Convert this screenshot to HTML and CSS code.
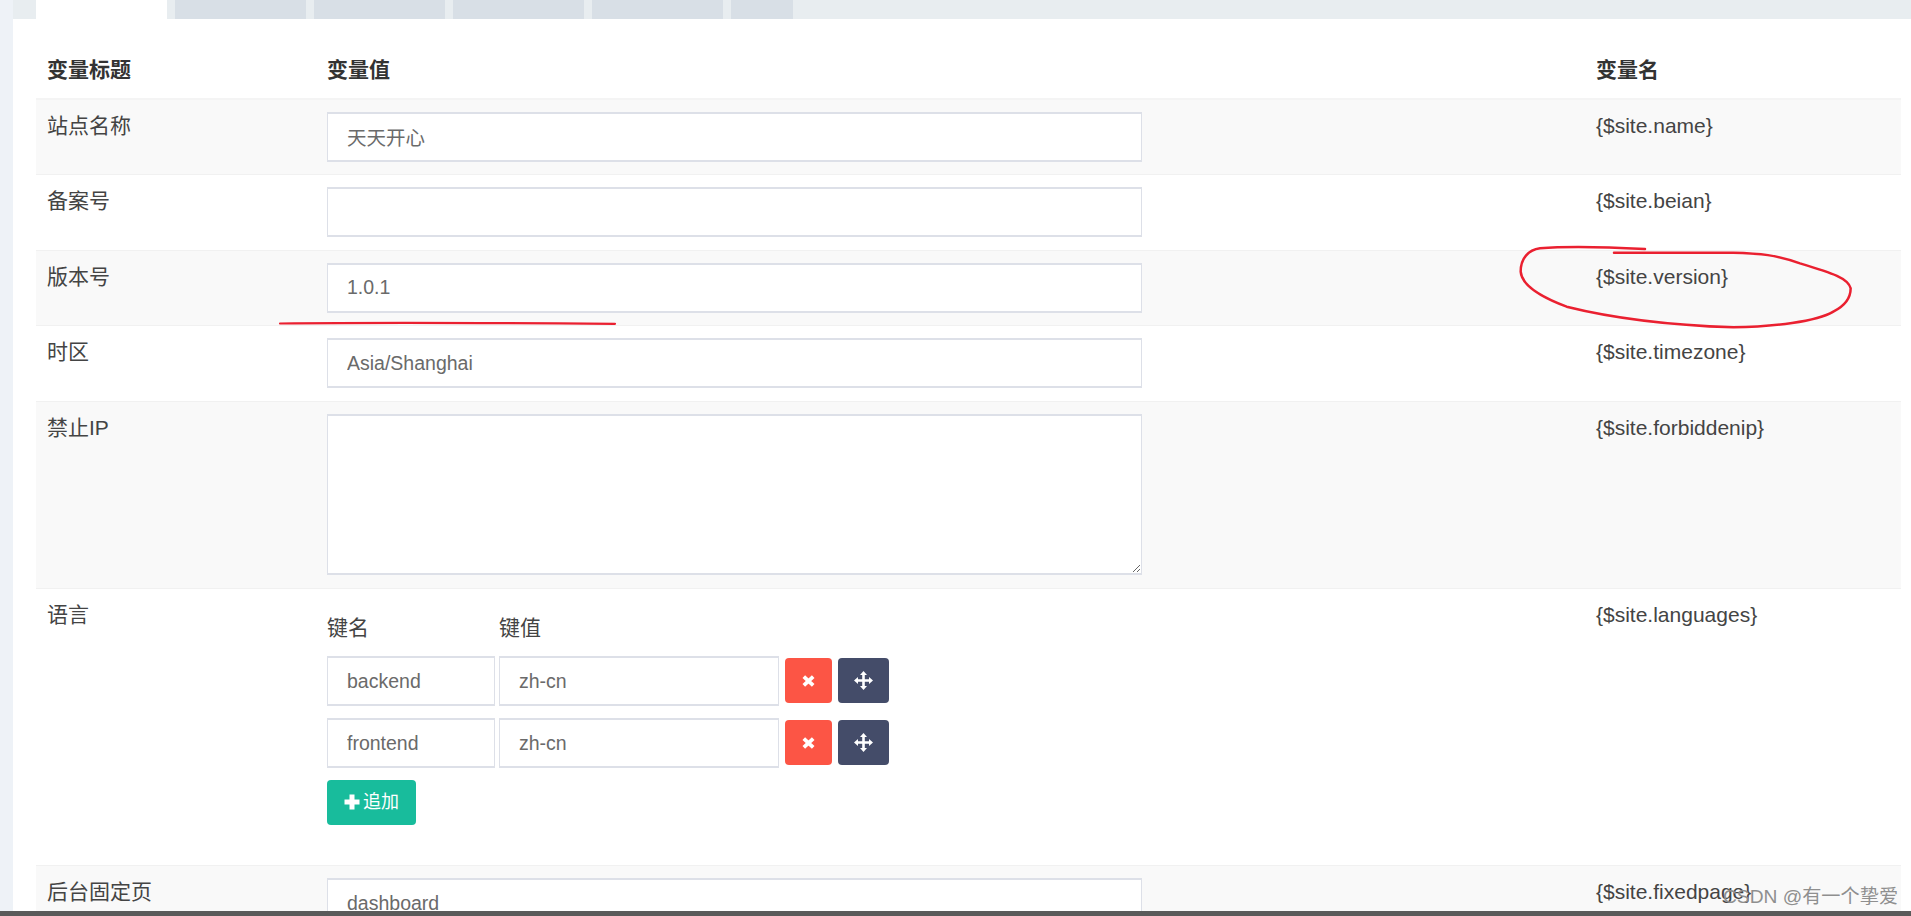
FILE: index.html
```html
<!DOCTYPE html>
<html lang="zh-CN">
<head>
<meta charset="utf-8">
<title>系统配置</title>
<link rel="stylesheet" href="styles.css">
</head>
<body>
<div class="page">
  <div class="sidebar"></div>
  <main class="main">
    <nav class="tabs">
      <div class="tab tab-active"></div>
      <div class="tab"></div>
      <div class="tab"></div>
      <div class="tab"></div>
      <div class="tab"></div>
      <div class="tab tab-short"></div>
    </nav>
    <section class="panel">
      <div class="row row-head">
        <div class="cell">变量标题</div>
        <div class="cell">变量值</div>
        <div class="cell">变量名</div>
      </div>
      <div class="row row-odd">
        <div class="cell">站点名称</div>
        <div class="cell"><input class="field field-wide" value="天天开心"></div>
        <div class="cell">{$site.name}</div>
      </div>
      <div class="row">
        <div class="cell">备案号</div>
        <div class="cell"><input class="field field-wide" value=""></div>
        <div class="cell">{$site.beian}</div>
      </div>
      <div class="row row-odd">
        <div class="cell">版本号</div>
        <div class="cell"><input class="field field-wide" value="1.0.1"></div>
        <div class="cell">{$site.version}</div>
      </div>
      <div class="row">
        <div class="cell">时区</div>
        <div class="cell"><input class="field field-wide" value="Asia/Shanghai"></div>
        <div class="cell">{$site.timezone}</div>
      </div>
      <div class="row row-odd">
        <div class="cell">禁止IP</div>
        <div class="cell"><textarea class="field field-wide field-area"></textarea></div>
        <div class="cell">{$site.forbiddenip}</div>
      </div>
      <div class="row">
        <div class="cell">语言</div>
        <div class="cell">
          <div class="kv kv-head"><span>键名</span><span>键值</span></div>
          <div class="kv">
            <input class="field" value="backend">
            <input class="field" value="zh-cn">
            <button class="btn btn-del" type="button"><svg class="ico-x" viewBox="0 0 13 12"><path d="M1.800 1.600 11.200 10.400M11.200 1.600 1.800 10.400"/></svg></button>
            <button class="btn btn-move" type="button"><svg class="ico-move" viewBox="0 0 19 19"><path class="ico-move-line" d="M9.500 3v13M3 9.500h13"/><path d="M9.500 0 13 4H6ZM9.500 19 6 15h7ZM0 9.500 4 6v7ZM19 9.500 15 13V6Z"/></svg></button>
          </div>
          <div class="kv">
            <input class="field" value="frontend">
            <input class="field" value="zh-cn">
            <button class="btn btn-del" type="button"><svg class="ico-x" viewBox="0 0 13 12"><path d="M1.800 1.600 11.200 10.400M11.200 1.600 1.800 10.400"/></svg></button>
            <button class="btn btn-move" type="button"><svg class="ico-move" viewBox="0 0 19 19"><path class="ico-move-line" d="M9.500 3v13M3 9.500h13"/><path d="M9.500 0 13 4H6ZM9.500 19 6 15h7ZM0 9.500 4 6v7ZM19 9.500 15 13V6Z"/></svg></button>
          </div>
          <button class="btn btn-add" type="button"><svg class="ico-plus" viewBox="0 0 16 16"><path d="M8 .5v15M.5 8h15"/></svg>追加</button>
        </div>
        <div class="cell">{$site.languages}</div>
      </div>
      <div class="row row-odd">
        <div class="cell">后台固定页</div>
        <div class="cell"><input class="field field-wide field-low" value="dashboard"></div>
        <div class="cell">{$site.fixedpage}</div>
      </div>
    </section>
  </main>
</div>
<div class="statusbar"></div>
<svg class="ink" viewBox="0 0 1911 916" aria-hidden="true">
  <path class="ink-line" d="M280 323.500 C 380 322.500, 500 323, 615 323.800"/>
  <g transform="translate(1400 0) scale(.33333)">
    <path class="ink-loop" d="M735 747 C 640 742, 500 738, 420 745 C 385 750, 362 775, 362 815 C 365 855, 420 890, 500 920 C 620 950, 800 975, 1000 982 C 1120 980, 1250 965, 1300 935 C 1340 915, 1352 890, 1352 865 C 1345 835, 1300 820, 1200 790 C 1130 765, 1080 760, 1000 758 L 642 758"/>
  </g>
</svg>
<div class="watermark">CSDN @有一个挚爱</div>
</body>
</html>
```

FILE: styles.css
```css
* { box-sizing: border-box; }

html, body {
  margin: 0;
  height: 100%;
  overflow: hidden;
}

body {
  position: relative;
  display: flex;
  flex-direction: column;
  background: #fff;
  color: #444;
  font-family: "Liberation Sans", "Noto Sans CJK SC", sans-serif;
  font-size: 21px;
  line-height: 27px;
}

.page {
  flex: 1;
  min-height: 0;
  display: flex;
  overflow: hidden;
}

.sidebar {
  flex: 0 0 13px;
  background: #eef2f7;
}

.main {
  flex: 1;
  min-width: 0;
  display: flex;
  flex-direction: column;
}

.tabs {
  flex: 0 0 19px;
  display: flex;
  gap: 8px;
  padding-left: 23px;
  background: #e8edf0;
}

.tab {
  flex: 0 0 131px;
  background: #d8dfe6;
}

.tab-active { background: #fff; }
.tab-short { flex-basis: 62px; }

.panel {
  padding: 20.575px 10px 0 23px;
}

.row {
  display: grid;
  grid-template-columns: 279px 1269px 317px;
  border-top: 1px solid #f1f1f1;
}

.row-odd { background: #f9f9f9; }

.row-head {
  border-top: 0;
  border-bottom: 2px solid #f4f4f4;
  font-weight: 700;
  color: #333;
}

.row-head .cell { padding: 16px 12px 15px; }

.row-head + .row { border-top: 0; }

.cell { padding: 12.275px 12px; }

.cell:first-child { padding-left: 11px; }

.field {
  display: block;
  width: 100%;
  height: 50px;
  padding: 2px 19px 0;
  border: 1px solid #dde0e8;
  border-bottom-width: 2px;
  border-top-width: 2px;
  border-radius: 0;
  background: #fff;
  color: #6a6a6a;
  font: 19.500px/1.4 "Liberation Sans", "Noto Sans CJK SC", sans-serif;
  outline: none;
}

.field-wide {
  width: 815px;
  padding-top: 0;
}

.field-low { padding-top: 1px; }

.field-area {
  height: 161.500px;
  resize: vertical;
}

.kv {
  display: grid;
  grid-template-columns: 168px 280px 47px 51px;
  column-gap: 4px;
  align-items: center;
  justify-content: start;
  margin-bottom: 12px;
}

.kv .btn-del { margin-left: 2px; }
.kv .btn-move { margin-left: 4px; }

.kv-head {
  padding-top: 13px;
  margin-bottom: 15px;
}

.btn {
  display: flex;
  align-items: center;
  justify-content: center;
  height: 45px;
  padding: 0;
  border: 0;
  border-radius: 4px;
  color: #fff;
  font: 18px/1 "Liberation Sans", "Noto Sans CJK SC", sans-serif;
}

.btn-del { width: 47px; background: #fc5545; }
.btn-move { width: 51px; background: #444c69; }

.btn-add {
  width: 89px;
  gap: 3px;
  margin-bottom: 27.650px;
  background: #18bc9c;
}

.ico-x {
  width: 13px;
  height: 12px;
  fill: none;
  stroke: #fff;
  stroke-width: 3.800;
}

.ico-move {
  width: 19px;
  height: 19px;
  fill: #fff;
}

.ico-move-line {
  fill: none;
  stroke: #fff;
  stroke-width: 2.600;
}

.ico-plus {
  width: 16px;
  height: 16px;
  fill: none;
  stroke: #fff;
  stroke-width: 5;
}

.statusbar {
  flex: 0 0 5px;
  background: #5a5a5a;
}

.ink {
  position: absolute;
  inset: 0;
  width: 100%;
  height: 100%;
  pointer-events: none;
}

.ink-line {
  fill: none;
  stroke: #ea2030;
  stroke-width: 2.200;
  stroke-linecap: round;
}

.ink-loop {
  fill: none;
  stroke: #ea2030;
  stroke-width: 7.500;
  stroke-linecap: round;
}

.watermark {
  position: absolute;
  left: 1723px;
  top: 884px;
  color: #8f8f8f;
  font-size: 19.200px;
  line-height: 26px;
  white-space: nowrap;
}
```
